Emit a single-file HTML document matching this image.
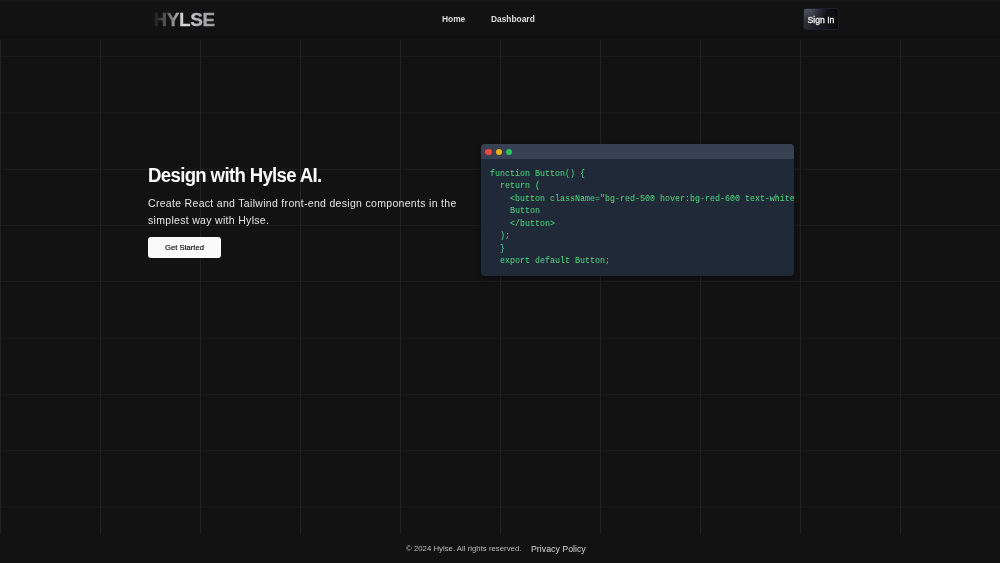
<!DOCTYPE html>
<html>
<head>
<meta charset="utf-8">
<style>
html,body{margin:0;padding:0;}
.wrap{position:absolute;left:0;top:0;width:1000px;height:563px;will-change:transform;}
body{width:1000px;height:563px;overflow:hidden;background:#121212;position:relative;font-family:"Liberation Sans",sans-serif;}
.grid{position:absolute;left:0;top:0;width:1000px;height:563px;}
.v{position:absolute;top:40px;height:493px;width:1px;background:#222222;}
.h{position:absolute;left:0;width:1000px;height:1px;}
.nb{position:absolute;left:0;top:36px;width:1000px;height:3px;background:rgba(0,0,0,0.09);}
.tb{position:absolute;left:0;top:0;width:1000px;height:4px;background:linear-gradient(to bottom,rgba(255,255,255,0.025),rgba(255,255,255,0));}
.logo{position:absolute;left:153px;top:8px;}
.nav a{position:absolute;top:13.2px;font-size:8.4px;font-weight:bold;color:#dedede;line-height:12px;text-decoration:none;}
.signin{position:absolute;left:803px;top:8px;width:36px;height:22px;box-sizing:border-box;border-radius:3px;
  background:radial-gradient(ellipse 60% 70% at 8% 0%,rgba(95,102,115,0.75),rgba(95,102,115,0) 100%),linear-gradient(to right,#2a2e35 0%,#181a1f 45%,#08090b 100%);border:1px solid #1a202a;
  color:#f0f0f0;font-size:8.6px;font-weight:normal;-webkit-text-stroke:0.3px #f0f0f0;line-height:20px;padding-top:1px;text-align:center;}
h1{position:absolute;left:148px;top:160.5px;margin:0;font-size:19.6px;font-weight:bold;color:#fafafa;line-height:28px;letter-spacing:-0.7px;transform:scaleX(0.95);transform-origin:0 0;white-space:nowrap;}
p.lead{position:absolute;left:148px;top:194.5px;margin:0;width:330px;font-size:10.1px;line-height:17px;letter-spacing:0.3px;color:#e5e5e5;transform:scaleX(1.04);transform-origin:0 0;}
.gs{position:absolute;left:148px;top:237px;width:73px;height:20.5px;border-radius:3px;background:#fafafa;color:#0a0a0a;-webkit-text-stroke:0.15px #0a0a0a;font-size:7.6px;line-height:21.5px;text-align:center;}
.win{position:absolute;left:481px;top:144px;width:313px;height:131.8px;border-radius:4px;background:#1f2937;overflow:hidden;box-shadow:0 2px 5px rgba(0,0,0,0.45);}
.bar{height:14.6px;background:#374151;position:relative;}
.dot{position:absolute;top:4.5px;width:6.3px;height:6.3px;border-radius:50%;}
pre{margin:0;padding:9.3px 0 0 9px;font-family:"Liberation Mono",monospace;font-size:8.333px;line-height:12.5px;color:#4ade80;white-space:pre;}
.foot{position:absolute;top:542px;font-size:7.8px;line-height:14px;color:#bdbdbd;white-space:nowrap;}
.pp{position:absolute;top:540.5px;left:531px;font-size:8.8px;line-height:16px;color:#d4d4d4;white-space:nowrap;}
</style>
</head>
<body><div class="wrap">
<div class="grid"><i class="nb"></i><i class="tb"></i><i class="h" style="top:56px;background:rgb(27,27,27)"></i><i class="h" style="top:112px;background:rgb(25,25,25)"></i><i class="h" style="top:113px;background:rgb(20,20,20)"></i><i class="h" style="top:168px;background:rgb(20,20,20)"></i><i class="h" style="top:169px;background:rgb(26,26,26)"></i><i class="h" style="top:225px;background:rgb(27,27,27)"></i><i class="h" style="top:281px;background:rgb(27,27,27)"></i><i class="h" style="top:337px;background:rgb(22,22,22)"></i><i class="h" style="top:338px;background:rgb(24,24,24)"></i><i class="h" style="top:394px;background:rgb(27,27,27)"></i><i class="h" style="top:450px;background:rgb(27,27,27)"></i><i class="h" style="top:506px;background:rgb(23,23,23)"></i><i class="h" style="top:507px;background:rgb(22,22,22)"></i><i class="v" style="left:0px"></i><i class="v" style="left:100px"></i><i class="v" style="left:200px"></i><i class="v" style="left:300px"></i><i class="v" style="left:400px"></i><i class="v" style="left:500px"></i><i class="v" style="left:600px"></i><i class="v" style="left:700px"></i><i class="v" style="left:800px"></i><i class="v" style="left:900px"></i></div>
<svg class="logo" width="80" height="30" viewBox="0 0 80 30"><defs><linearGradient id="lg" gradientUnits="userSpaceOnUse" x1="0" y1="0" x2="62" y2="0"><stop offset="0" stop-color="#161616"/><stop offset="0.25" stop-color="#6a6a6a"/><stop offset="0.5" stop-color="#dcdcdc"/><stop offset="0.7" stop-color="#b8b8bc"/><stop offset="1" stop-color="#8f949c"/></linearGradient></defs><text x="0.3" y="18" font-family="Liberation Sans" font-weight="bold" font-size="19" letter-spacing="-0.35" fill="url(#lg)" stroke="url(#lg)" stroke-width="0.3">HYLSE</text></svg>
<div class="nav"><a style="left:442px">Home</a><a style="left:491px">Dashboard</a></div>
<div class="signin">Sign In</div>
<h1>Design with Hylse AI.</h1>
<p class="lead">Create React and Tailwind front-end design components in the simplest way with Hylse.</p>
<div class="gs">Get Started</div>
<div class="win">
  <div class="bar"><span class="dot" style="left:4.4px;background:#ef4444"></span><span class="dot" style="left:14.8px;background:#eab308"></span><span class="dot" style="left:25.1px;background:#22c55e"></span></div>
<pre>function Button() {
  return (
    &lt;button className="bg-red-500 hover:bg-red-600 text-white font-bold py-2 px-4 rounded"&gt;
    Button
    &lt;/button&gt;
  );
  }
  export default Button;</pre>
</div>
<div class="foot" style="left:406px">© 2024 Hylse. All rights reserved.</div>
<a class="pp">Privacy Policy</a>
</div></body>
</html>
